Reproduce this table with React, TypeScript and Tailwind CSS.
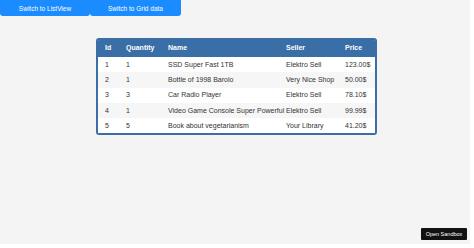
import React from 'react';

interface Item {
    id: number;
    quantity: number;
    name: string;
    seller: string;
    price: string;
}

const items: Item[] = [
    { id: 1, quantity: 1, name: 'SSD Super Fast 1TB', seller: 'Elektro Sell', price: '123.00$' },
    { id: 2, quantity: 1, name: 'Bottle of 1998 Barolo', seller: 'Very Nice Shop', price: '50.00$' },
    { id: 3, quantity: 3, name: 'Car Radio Player', seller: 'Elektro Sell', price: '78.10$' },
    { id: 4, quantity: 1, name: 'Video Game Console Super Powerful', seller: 'Elektro Sell', price: '99.99$' },
    { id: 5, quantity: 5, name: 'Book about vegetarianism', seller: 'Your Library', price: '41.20$' },
];

const App: React.FC = () => {
    return (
        <div className="w-[474px] h-[248px] bg-white" style={{ fontFamily: '"Liberation Sans", Arial, sans-serif' }}>
            <div className="w-[470px] h-[244px] bg-[#f4f4f4] relative">
                <div className="flex">
                    <button className="w-[90px] h-[19px] -mt-[3px] pt-[5px] bg-[#1a8cff] text-white text-[6.5px] rounded-[3px]">Switch to ListView</button>
                    <button className="w-[91px] h-[19px] -mt-[3px] pt-[5px] bg-[#1a8cff] text-white text-[6.5px] rounded-[3px]">Switch to Grid data</button>
                </div>
                <div className="flex justify-center pt-[22px] pl-[3px]">
                    <table className="w-[281px] table-fixed border-2 border-[#3a6ea6] rounded-[3px] border-separate border-spacing-0 overflow-hidden bg-white text-[7px] text-[#333]">
                        <colgroup>
                            <col className="w-[21px]" />
                            <col className="w-[42px]" />
                            <col className="w-[118px]" />
                            <col className="w-[59px]" />
                            <col className="w-[37px]" />
                        </colgroup>
                        <thead>
                            <tr className="bg-[#3a6ea6] text-white h-[17px]">
                                <th className="text-left font-bold pl-[7px]">Id</th>
                                <th className="text-left font-bold pl-[7px]">Quantity</th>
                                <th className="text-left font-bold pl-[7px]">Name</th>
                                <th className="text-left font-bold pl-[7px]">Seller</th>
                                <th className="text-left font-bold pl-[7px]">Price</th>
                            </tr>
                        </thead>
                        <tbody>
                            {items.map((item, i) => (
                                <tr key={item.id} className={`h-[15.3px] ${i % 2 === 1 ? 'bg-[#f6f6f6]' : 'bg-white'}`}>
                                    <td className="pl-[7px] pt-[1px] whitespace-nowrap">{item.id}</td>
                                    <td className="pl-[7px] pt-[1px] whitespace-nowrap">{item.quantity}</td>
                                    <td className="pl-[7px] pt-[1px] whitespace-nowrap">{item.name}</td>
                                    <td className="pl-[7px] pt-[1px] whitespace-nowrap">{item.seller}</td>
                                    <td className="pl-[7px] pt-[1px] whitespace-nowrap">{item.price}</td>
                                </tr>
                            ))}
                        </tbody>
                    </table>
                </div>
                <button className="absolute right-[3px] bottom-[4px] w-[46px] h-[12px] bg-[#111] text-white text-[5.5px] rounded-[1px]">Open Sandbox</button>
            </div>
        </div>
    );
};

export default App;
